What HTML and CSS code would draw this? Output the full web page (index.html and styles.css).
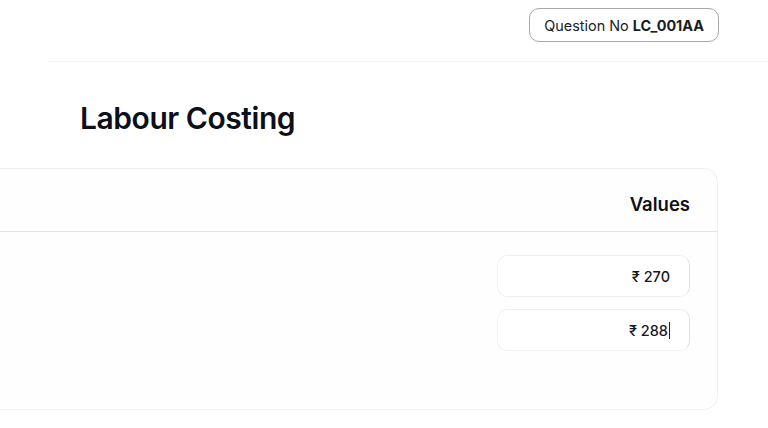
FILE: index.html
```html
<!DOCTYPE html>
<html>
<head>
<meta charset="utf-8">
<link rel="stylesheet" href="styles.css">
</head>
<body>
<header class="topbar">
  <div class="qno">Question No <b>LC_001AA</b></div>
</header>
<div class="rule"></div>
<main class="content">
  <h1 class="title">Labour Costing</h1>
  <section class="card">
    <div class="card-head">Values</div>
    <div class="card-body">
      <div class="field">₹ 270</div>
      <div class="field">₹ 288<span class="caret"></span></div>
    </div>
  </section>
</main>
</body>
</html>
```
FILE: styles.css
```css
html, body {
  margin: 0;
  padding: 0;
  background: #ffffff;
  font-family: Inter, "Liberation Sans", sans-serif;
  color: #0d0f1a;
}
.topbar {
  display: flex;
  justify-content: flex-end;
  padding: 8px 49px 0 0;
  height: 61px;
  box-sizing: border-box;
}
.qno {
  height: 34px;
  box-sizing: border-box;
  border: 1px solid #a9a9ad;
  border-radius: 10px;
  padding: 0 14px;
  display: flex;
  align-items: center;
  font-size: 14.4px;
  color: #1a1c24;
}
.qno b {
  font-weight: 700;
  margin-left: 4px;
}
.rule {
  margin: 0 0 0 48px;
  border-top: 1px solid #f4f4f6;
}
.content {
  padding: 0 50px 0 0;
}
.title {
  margin: 38px 0 0 80px;
  font-size: 30px;
  line-height: 36px;
  font-weight: 600;
  letter-spacing: -0.45px;
}
.card {
  margin: 32px 0 0 -20px;
  border: 1px solid #eeeef0;
  border-radius: 14px;
  background: #fefefe;
}
.card-head {
  height: 63px;
  box-sizing: border-box;
  padding-top: 8px;
  display: flex;
  align-items: center;
  justify-content: flex-end;
  padding-right: 27px;
  font-size: 18.5px;
  font-weight: 600;
  border-bottom: 1px solid #e4e4e7;
}
.card-body {
  display: flex;
  flex-direction: column;
  align-items: flex-end;
  gap: 12px;
  padding: 23px 27px 58px 0;
}
.field {
  width: 193px;
  height: 42px;
  box-sizing: border-box;
  border: 1px solid #f1f1f3;
  border-right-color: #e2e2e5;
  border-radius: 10px;
  background: #ffffff;
  display: flex;
  align-items: center;
  justify-content: flex-end;
  padding-right: 19px;
  font-size: 14.5px;
  font-weight: 500;
  color: #15171f;
}
.caret {
  display: inline-block;
  width: 1px;
  height: 17px;
  background: #222;
  margin-left: 1px;
}
```
